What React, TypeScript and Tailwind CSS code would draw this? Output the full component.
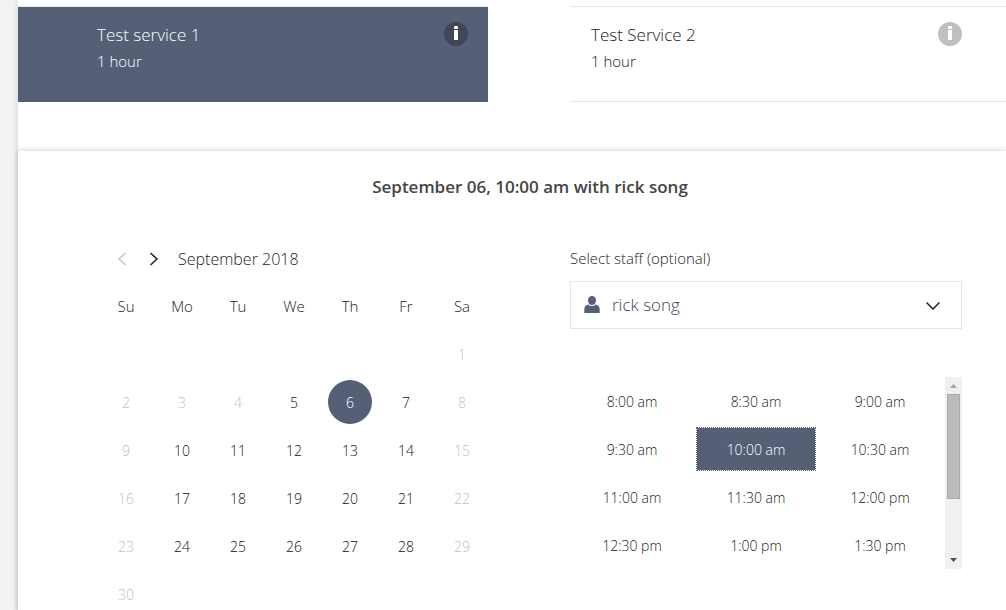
import { useState } from "react";
import clsx from "clsx";

const services = [
  { id: 1, name: "Test service 1", duration: "1 hour" },
  { id: 2, name: "Test Service 2", duration: "1 hour" },
];

const weekdays = ["Su", "Mo", "Tu", "We", "Th", "Fr", "Sa"];

// September 2018 starts on a Saturday
const weeks = [
  [0, 0, 0, 0, 0, 0, 1],
  [2, 3, 4, 5, 6, 7, 8],
  [9, 10, 11, 12, 13, 14, 15],
  [16, 17, 18, 19, 20, 21, 22],
  [23, 24, 25, 26, 27, 28, 29],
  [30, 0, 0, 0, 0, 0, 0],
];

const times = [
  "8:00 am",
  "8:30 am",
  "9:00 am",
  "9:30 am",
  "10:00 am",
  "10:30 am",
  "11:00 am",
  "11:30 am",
  "12:00 pm",
  "12:30 pm",
  "1:00 pm",
  "1:30 pm",
];

type Service = (typeof services)[number];

function InfoIcon() {
  return (
    <svg viewBox="0 0 24 24" className="size-6" aria-hidden="true">
      <circle cx="12" cy="12" r="12" fill="currentColor" />
      <rect x="10" y="4" width="4" height="3" rx="1" fill="#fff" />
      <rect x="10" y="8" width="4" height="10" fill="#fff" />
    </svg>
  );
}

function ServiceCard({
  service,
  selected,
  onSelect,
}: {
  service: Service;
  selected: boolean;
  onSelect: () => void;
}) {
  return (
    <div
      className={clsx(
        "flex h-24 items-start border-t border-[#e6e6e6]",
        selected
          ? "bg-[#556077] bg-clip-padding pr-5 pl-[79px] text-white"
          : "border-b pr-11 pl-[21px] text-[#222]"
      )}
    >
      <button
        type="button"
        onClick={onSelect}
        className="flex-1 cursor-pointer pt-3.5 text-left"
      >
        <span className="block text-[17px] leading-7">{service.name}</span>
        <span className="block text-[15px] leading-6">{service.duration}</span>
      </button>
      <button
        type="button"
        aria-label={`About ${service.name}`}
        className={clsx(
          "mt-[15px] size-6",
          selected ? "text-[#404857]" : "text-[#bfbfbf]"
        )}
      >
        <InfoIcon />
      </button>
    </div>
  );
}

function Calendar({
  day,
  onChange,
}: {
  day: number;
  onChange: (day: number) => void;
}) {
  return (
    <div>
      <div className="flex h-[47px] items-center">
        <button
          type="button"
          aria-label="Previous month"
          disabled
          className="flex h-8 w-12 items-center justify-center text-[#c4c4c4]"
        >
          <svg viewBox="0 0 10 14" className="h-3.5 w-2.5" fill="none">
            <path d="M8.5 1 2 7l6.5 6" stroke="currentColor" strokeWidth="1.5" />
          </svg>
        </button>
        <button
          type="button"
          aria-label="Next month"
          className="flex h-8 w-4 items-center justify-center text-[#222]"
        >
          <svg viewBox="0 0 10 14" className="h-3.5 w-2.5" fill="none">
            <path d="M1.5 1 8 7l-6.5 6" stroke="currentColor" strokeWidth="1.5" />
          </svg>
        </button>
        <h3 className="ml-4 text-[16px]">September 2018</h3>
      </div>
      <table className="w-full table-fixed border-collapse text-center text-[14px]">
        <thead>
          <tr className="h-12">
            {weekdays.map((name) => (
              <th key={name} scope="col" className="p-0 text-[15px] font-[350]">
                {name}
              </th>
            ))}
          </tr>
        </thead>
        <tbody>
          {weeks.map((week, row) => (
            <tr key={row} className="h-12">
              {week.map((date, col) => {
                const open = date > 4 && col > 0 && col < 6;
                return (
                  <td key={col} className="p-0">
                    {date > 0 && (
                      <button
                        type="button"
                        disabled={!open}
                        onClick={() => onChange(date)}
                        className={clsx(
                          "mx-auto block size-11 rounded-full",
                          !open && "text-[#bfbfbf]",
                          open && date !== day && "text-[#111]",
                          date === day && "bg-[#556077] text-white"
                        )}
                      >
                        {date}
                      </button>
                    )}
                  </td>
                );
              })}
            </tr>
          ))}
        </tbody>
      </table>
    </div>
  );
}

function StaffSelect({
  staff,
  onChange,
}: {
  staff: string;
  onChange: (staff: string) => void;
}) {
  return (
    <div>
      <label htmlFor="staff" className="flex h-[46px] items-center text-[15px]">
        Select staff (optional)
      </label>
      <div className="relative">
        <svg
          viewBox="0 0 16 17"
          className="pointer-events-none absolute top-[15px] left-3.5 h-[17px] w-4 text-[#556077]"
          fill="currentColor"
        >
          <ellipse cx="8" cy="4.5" rx="4" ry="4.5" />
          <path d="M.3 17v-3.500C.3 11 1.500 9 4.500 8.500c2 2 5 2 7 0 3 .5 4.200 2.500 4.200 5V17z" />
        </svg>
        <select
          id="staff"
          value={staff}
          onChange={(e) => onChange(e.target.value)}
          className="h-12 w-full appearance-none border border-[#e6e6e6] bg-white pr-12 pl-[41px] text-[17px] text-[#3f4653]"
        >
          <option>rick song</option>
        </select>
        <svg
          viewBox="0 0 14 8"
          className="pointer-events-none absolute top-[21px] right-[22px] h-2 w-3.5"
          fill="none"
        >
          <path d="m.5.5 6.500 6.500L13.500.5" stroke="#222" strokeWidth="1.500" />
        </svg>
      </div>
    </div>
  );
}

function TimeSlots({
  time,
  onChange,
}: {
  time: string;
  onChange: (time: string) => void;
}) {
  return (
    <div className="mt-12 flex h-48">
      <div className="grid flex-1 grid-cols-3 pr-[3px]">
        {times.map((slot) => (
          <button
            key={slot}
            type="button"
            onClick={() => onChange(slot)}
            className={clsx(
              "mx-0.5 my-0.5 h-11 border border-dotted text-[14px]",
              slot === time
                ? "border-[#666] bg-[#556077] bg-clip-padding text-white"
                : "border-transparent"
            )}
          >
            {slot}
          </button>
        ))}
      </div>
      {/* Scroll track */}
      <div className="flex w-[17px] flex-col items-center bg-[#f0f0f0]">
        <svg viewBox="0 0 17 17" className="size-[17px]" fill="#a3a3a3">
          <path d="m8.500 7 3.500 4H5z" />
        </svg>
        <div className="h-[105px] w-[13px] border border-[#a8a8a8] bg-[#bcbcbc]" />
        <svg viewBox="0 0 17 17" className="mt-auto size-[17px]" fill="#505050">
          <path d="M5 6h7l-3.500 4z" />
        </svg>
      </div>
    </div>
  );
}

export default function App() {
  const [service, setService] = useState(1);
  const [day, setDay] = useState(6);
  const [time, setTime] = useState("10:00 am");
  const [staff, setStaff] = useState("rick song");

  return (
    <div className="flex h-screen overflow-hidden bg-[#f3f3f3] pl-[18px] font-['Open_Sans',sans-serif] font-[350] text-[#222]">
      <main className="min-w-0 flex-1 bg-white shadow-[0_0_6px_rgba(0,0,0,0.15)]">
        {/* Services */}
        <section className="grid grid-cols-[minmax(0,470fr)_minmax(0,436fr)] gap-[82px] pt-1.5 pb-[49px]">
          {services.map((item) => (
            <ServiceCard
              key={item.id}
              service={item}
              selected={item.id === service}
              onSelect={() => setService(item.id)}
            />
          ))}
        </section>

        {/* Date and time */}
        <section className="pr-11 pl-20 shadow-[0_0_6px_rgba(0,0,0,0.2)]">
          <h2 className="pt-[22px] text-center text-[17px] leading-7 font-[550] text-[#444]">
            September {String(day).padStart(2, "0")}, {time} with {staff}
          </h2>
          <div className="mt-[34px] grid grid-cols-2 gap-20">
            <Calendar day={day} onChange={setDay} />
            <div>
              <StaffSelect staff={staff} onChange={setStaff} />
              <TimeSlots time={time} onChange={setTime} />
            </div>
          </div>
        </section>
      </main>
    </div>
  );
}
